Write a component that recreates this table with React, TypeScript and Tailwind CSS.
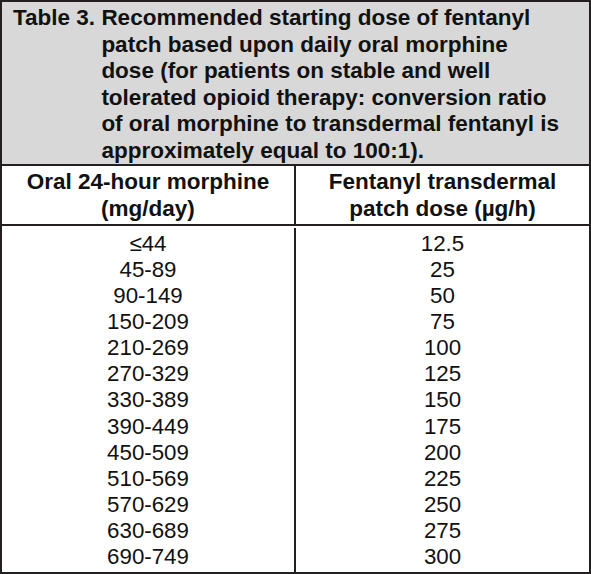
import React from "react";

const rows: [string, string][] = [
  ["\u226444", "12.5"],
  ["45-89", "25"],
  ["90-149", "50"],
  ["150-209", "75"],
  ["210-269", "100"],
  ["270-329", "125"],
  ["330-389", "150"],
  ["390-449", "175"],
  ["450-509", "200"],
  ["510-569", "225"],
  ["570-629", "250"],
  ["630-689", "275"],
  ["690-749", "300"],
];

export default function App() {
  return (
    <div
      className="w-[591px] h-[574px] border-2 border-[#231f20] bg-white text-[#111] flex flex-col"
      style={{ fontFamily: '"Liberation Sans", Arial, Helvetica, sans-serif' }}
    >
      <div className="h-[162px] shrink-0 bg-[#d8d8d8] pt-[3px] pl-[11px] flex text-[22.5px] leading-[26.6px] font-bold">
        <span className="shrink-0 whitespace-pre">Table 3. </span>
        <div>
          Recommended starting dose of fentanyl
          <br />
          patch based upon daily oral morphine
          <br />
          dose (for patients on stable and well
          <br />
          tolerated opioid therapy: conversion ratio
          <br />
          of oral morphine to transdermal fentanyl is
          <br />
          approximately equal to 100:1).
        </div>
      </div>
      <div className="border-t-2 border-[#231f20] grid grid-cols-[294px_293px] flex-1">
        <div className="h-[60px] border-r-2 border-b-2 border-[#231f20] pt-[3px] text-center font-bold text-[22.5px] leading-[26.5px]">
          Oral 24-hour morphine
          <br />
          (mg/day)
        </div>
        <div className="h-[60px] border-b-2 border-[#231f20] pt-[3px] text-center font-bold text-[22.5px] leading-[26.5px]">
          Fentanyl transdermal
          <br />
          patch dose (µg/h)
        </div>
        <div className="border-r-2 border-[#231f20] pt-[3px] text-center text-[22.3px] leading-[26.1px]">
          {rows.map((r) => (
            <div key={r[0]}>{r[0]}</div>
          ))}
        </div>
        <div className="pt-[3px] text-center text-[22.3px] leading-[26.1px]">
          {rows.map((r) => (
            <div key={r[0]}>{r[1]}</div>
          ))}
        </div>
      </div>
    </div>
  );
}
